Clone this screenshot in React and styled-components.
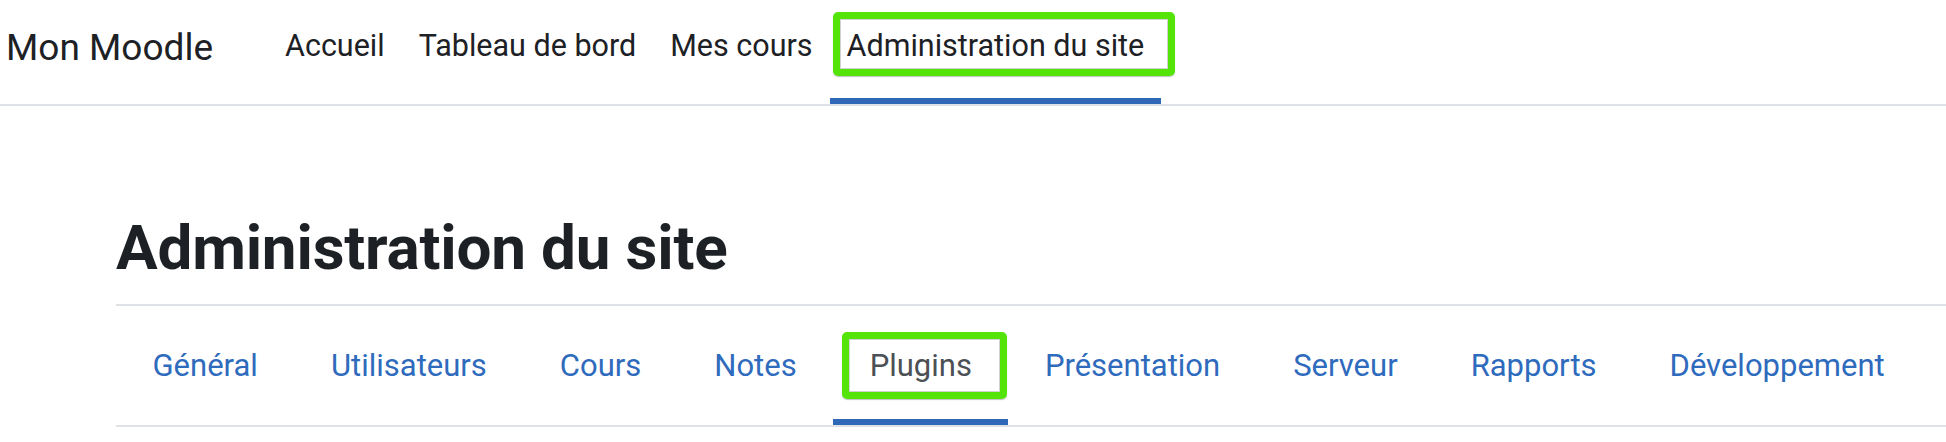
import React from "react";
import styled, { createGlobalStyle } from "styled-components";

const GlobalStyle = createGlobalStyle`
  body {
    margin: 0;
    background: #ffffff;
    font-family: Roboto, "Liberation Sans", Arial, sans-serif;
    color: #1d2125;
  }
`;

const Header = styled.header`
  display: flex;
  align-items: stretch;
  height: 104px;
  border-bottom: 2px solid #dee2e6;
`;

const Brand = styled.div`
  display: flex;
  align-items: center;
  padding: 0 0 10px 6px;
  margin-right: 55px;
  font-size: 37px;
  color: #1d2125;
`;

const NavList = styled.nav`
  display: flex;
  align-items: stretch;
`;

const NavItem = styled.a`
  position: relative;
  display: flex;
  align-items: center;
  padding: 0 17px 8px 17px;
  font-size: 30.5px;
  color: #1d2125;
  text-decoration: none;
  border-bottom: 6px solid ${(p) => (p.$active ? "#3068b8" : "transparent")};
`;

const Highlight = styled.span`
  position: absolute;
  top: ${(p) => p.$top}px;
  left: ${(p) => p.$left}px;
  right: ${(p) => p.$right}px;
  height: ${(p) => p.$height}px;
  border: 7px solid #55e40a;
  border-radius: 5px;
  box-sizing: border-box;
  box-shadow: inset 0 0 0 1px rgba(0, 0, 0, 0.18), 0 1px 1px rgba(0, 0, 0, 0.25);
  pointer-events: none;
`;

const Main = styled.main`
  padding-left: 116px;
`;

const PageHeader = styled.div`
  padding-top: 105px;
  padding-bottom: 20px;
  border-bottom: 2px solid #dee2e6;
`;

const Title = styled.h1`
  margin: 0;
  font-size: 62px;
  line-height: 73px;
  font-weight: 700;
  color: #1d2125;
  letter-spacing: -0.2px;
`;

const TabList = styled.div`
  display: flex;
  align-items: stretch;
  height: 119px;
  border-bottom: 2px solid #dee2e6;
`;

const Tab = styled.a`
  position: relative;
  display: flex;
  align-items: center;
  padding: 6px 36.5px 0 36.5px;
  font-size: 31px;
  color: ${(p) => (p.$active ? "#4b5055" : "#2f6bbd")};
  text-decoration: none;
  border-bottom: 6px solid ${(p) => (p.$active ? "#3068b8" : "transparent")};
`;

const navLinks = ["Accueil", "Tableau de bord", "Mes cours", "Administration du site"];
const tabs = [
  "Général",
  "Utilisateurs",
  "Cours",
  "Notes",
  "Plugins",
  "Présentation",
  "Serveur",
  "Rapports",
  "Développement",
];

export default function App() {
  return (
    <>
      <GlobalStyle />
      <Header>
        <Brand>Mon Moodle</Brand>
        <NavList>
          {navLinks.map((label) => {
            const active = label === "Administration du site";
            return (
              <NavItem key={label} $active={active}>
                {label}
                {active && <Highlight $top={12} $left={3} $right={-14} $height={64} />}
              </NavItem>
            );
          })}
        </NavList>
      </Header>
      <Main>
        <PageHeader>
          <Title>Administration du site</Title>
        </PageHeader>
        <TabList>
          {tabs.map((label) => {
            const active = label === "Plugins";
            return (
              <Tab key={label} $active={active}>
                {label}
                {active && <Highlight $top={26} $left={9} $right={1} $height={67} />}
              </Tab>
            );
          })}
        </TabList>
      </Main>
    </>
  );
}
